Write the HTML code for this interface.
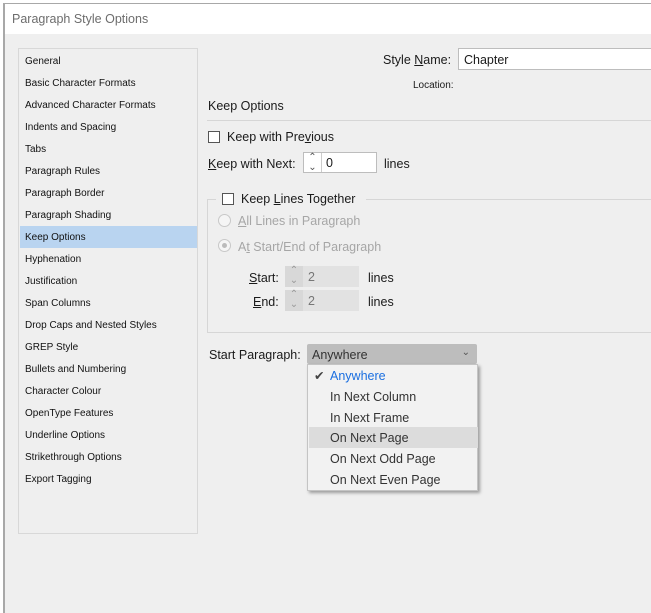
<!DOCTYPE html>
<html><head><style>
*{margin:0;padding:0;box-sizing:border-box}
body{width:651px;height:604px;background:#fff;position:relative;overflow:hidden;font-family:"Liberation Sans",sans-serif;color:#1a1a1a}
.a{position:absolute}
.win{left:3px;top:3px;width:660px;height:610px;border-left:2px solid #a8a8a8;border-top:1px solid #a8a8a8;background:#efefef}
.title{left:5px;top:4px;width:660px;height:30px;background:#fff;font-size:12.5px;color:#6d6d6d;padding:8px 0 0 7px}
.list{left:18px;top:48px;width:180px;height:486px;border:1px solid #d8d8d8}
.li{position:absolute;left:1px;width:177px;height:22px;font-size:10px;padding:6px 0 0 5px;color:#111}
.sel{background:#b9d4f0}
.t{font-size:12.5px;position:absolute;white-space:nowrap;margin-top:1px}
.cb{position:absolute;width:12px;height:12px;border:1px solid #555;background:#fff}
.dis{color:#a6a6a6}
u{text-decoration:underline}
.mi{position:absolute;left:1px;width:169px;height:21px;font-size:12.5px;padding:4px 0 0 21px;color:#333}
.ar{font-size:10px;text-align:center;line-height:10px}
</style></head><body>
<div class="a win"></div>
<div class="a title">Paragraph Style Options</div>
<div class="a list">
<div class="li" style="top:1px">General</div>
<div class="li" style="top:23px">Basic Character Formats</div>
<div class="li" style="top:45px">Advanced Character Formats</div>
<div class="li" style="top:67px">Indents and Spacing</div>
<div class="li" style="top:89px">Tabs</div>
<div class="li" style="top:111px">Paragraph Rules</div>
<div class="li" style="top:133px">Paragraph Border</div>
<div class="li" style="top:155px">Paragraph Shading</div>
<div class="li sel" style="top:177px">Keep Options</div>
<div class="li" style="top:199px">Hyphenation</div>
<div class="li" style="top:221px">Justification</div>
<div class="li" style="top:243px">Span Columns</div>
<div class="li" style="top:265px">Drop Caps and Nested Styles</div>
<div class="li" style="top:287px">GREP Style</div>
<div class="li" style="top:309px">Bullets and Numbering</div>
<div class="li" style="top:331px">Character Colour</div>
<div class="li" style="top:353px">OpenType Features</div>
<div class="li" style="top:375px">Underline Options</div>
<div class="li" style="top:397px">Strikethrough Options</div>
<div class="li" style="top:419px">Export Tagging</div>
</div>

<div class="t" style="left:383px;top:52px">Style <u>N</u>ame:</div>
<div class="a" style="left:458px;top:48px;width:200px;height:22px;border:1px solid #bdbdbd;background:#fff;font-size:12.5px;padding:4px 0 0 5px">Chapter</div>
<div class="t" style="left:413px;top:79px;font-size:10px">Location:</div>
<div class="t" style="left:208px;top:98px">Keep Options</div>
<div class="a" style="left:207px;top:120px;width:450px;height:1px;background:#d6d6d6"></div>

<div class="cb" style="left:208px;top:131px"></div>
<div class="t" style="left:227px;top:129px">Keep with Pre<u>v</u>ious</div>
<div class="t" style="left:208px;top:156px"><u>K</u>eep with Next:</div>
<div class="a" style="left:303px;top:152px;width:74px;height:21px;border:1px solid #bdbdbd;background:#fff"></div>
<div class="a ar" style="left:304px;top:153px;width:18px;height:19px;border-right:1px solid #ccc;color:#555">&#8963;<br>&#8964;</div>
<div class="t" style="left:326px;top:155px">0</div>
<div class="t" style="left:384px;top:156px">lines</div>

<div class="a" style="left:207px;top:199px;width:450px;height:134px;border:1px solid #d6d6d6"></div>
<div class="a" style="left:216px;top:192px;width:150px;height:14px;background:#efefef"></div>
<div class="cb" style="left:222px;top:193px"></div>
<div class="t" style="left:241px;top:191px">Keep <u>L</u>ines Together</div>
<div class="a" style="left:218px;top:214px;width:13px;height:13px;border:1px solid #c8c8c8;border-radius:50%;background:#f5f5f5"></div>
<div class="t dis" style="left:238px;top:213px"><u>A</u>ll Lines in Paragraph</div>
<div class="a" style="left:218px;top:239px;width:13px;height:13px;border:1px solid #c8c8c8;border-radius:50%;background:#f5f5f5"><div class="a" style="left:3px;top:3px;width:5px;height:5px;border-radius:50%;background:#bbb"></div></div>
<div class="t dis" style="left:238px;top:239px">A<u>t</u> Start/End of Paragraph</div>

<div class="t" style="left:249px;top:270px"><u>S</u>tart:</div>
<div class="a" style="left:285px;top:266px;width:74px;height:21px;background:#e2e2e2"></div>
<div class="a ar" style="left:285px;top:266px;width:18px;height:21px;background:#d8d8d8;color:#999">&#8963;<br>&#8964;</div>
<div class="t" style="left:308px;top:269px;color:#777">2</div>
<div class="t" style="left:368px;top:270px">lines</div>
<div class="t" style="left:253px;top:294px"><u>E</u>nd:</div>
<div class="a" style="left:285px;top:290px;width:74px;height:21px;background:#e2e2e2"></div>
<div class="a ar" style="left:285px;top:290px;width:18px;height:21px;background:#d8d8d8;color:#999">&#8963;<br>&#8964;</div>
<div class="t" style="left:308px;top:293px;color:#777">2</div>
<div class="t" style="left:368px;top:294px">lines</div>

<div class="t" style="left:209px;top:347px">Start Para<u>g</u>raph:</div>
<div class="a" style="left:307px;top:344px;width:170px;height:20px;background:#bdbdbd;border-radius:2px;font-size:12.5px;color:#333;padding:4px 0 0 5px">Anywhere<span style="position:absolute;right:7px;top:3px;font-size:10px;color:#555">&#8964;</span></div>
<div class="a" style="left:307px;top:364px;width:171px;height:127px;background:#f2f2f2;border:1px solid #c4c4c4;box-shadow:2px 2px 3px rgba(0,0,0,.35)">
<div class="mi" style="top:0;color:#1b6fe0"><span style="position:absolute;left:5px;top:3px;color:#444">&#10004;</span>Anywhere</div>
<div class="mi" style="top:21px">In Next Column</div>
<div class="mi" style="top:42px">In Next Frame</div>
<div class="mi" style="top:62px;background:#dcdcdc">On Next Page</div>
<div class="mi" style="top:83px">On Next Odd Page</div>
<div class="mi" style="top:104px">On Next Even Page</div>
</div>
</body></html>
